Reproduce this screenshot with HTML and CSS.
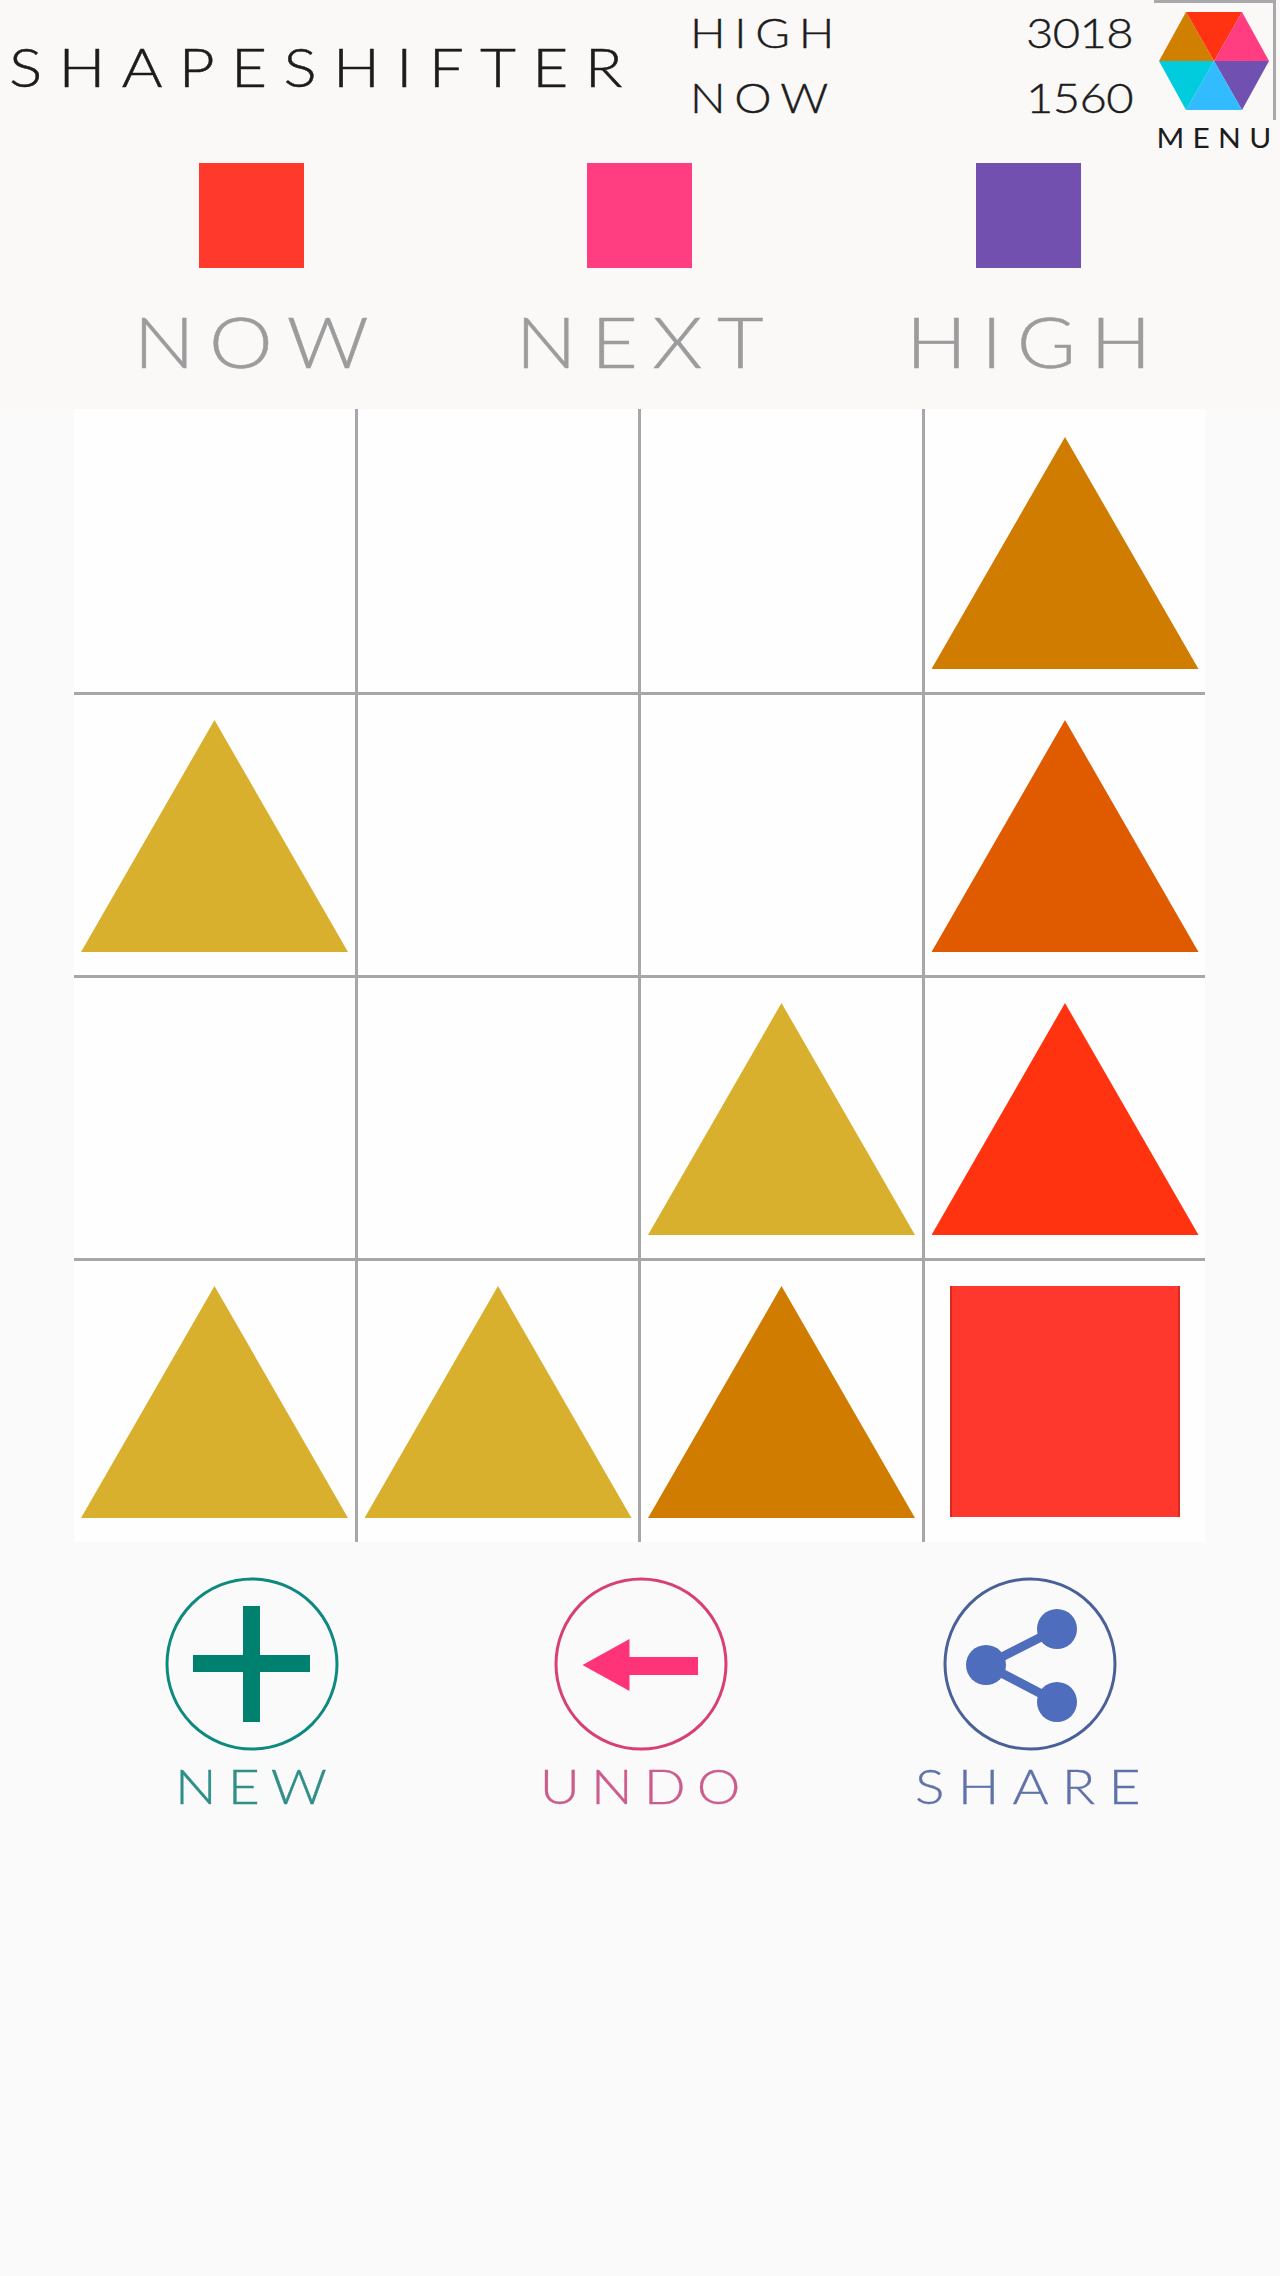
FILE: index.html
```html
<!DOCTYPE html>
<html lang="en">
<head>
<meta charset="utf-8">
<title>Shapeshifter</title>
<link rel="stylesheet" href="styles.css">
</head>
<body>
<div class="page">
  <header class="header">
    <h1 class="title">SHAPESHIFTER</h1>
    <div class="scores">
      <span class="score-label">HIGH</span><span class="score-value">3018</span>
      <span class="score-label">NOW</span><span class="score-value">1560</span>
    </div>
    <div class="menu">
      <svg class="hex" viewBox="0 0 110 98" width="110" height="98">
        <polygon class="h-orange" points="0,49 27,0 55,49"/>
        <polygon class="h-red" points="27,0 83,0 55,49"/>
        <polygon class="h-pink" points="83,0 110,49 55,49"/>
        <polygon class="h-purple" points="110,49 83,98 55,49"/>
        <polygon class="h-sky" points="83,98 27,98 55,49"/>
        <polygon class="h-cyan" points="27,98 0,49 55,49"/>
      </svg>
      <span class="menu-label">MENU</span>
    </div>
    <div class="corner"></div>
  </header>

  <section class="swatches">
    <div class="swatch-col"><div class="swatch s-red"></div><span class="swatch-label">NOW</span></div>
    <div class="swatch-col"><div class="swatch s-pink"></div><span class="swatch-label">NEXT</span></div>
    <div class="swatch-col"><div class="swatch s-purple"></div><span class="swatch-label">HIGH</span></div>
  </section>

  <section class="board">
    <div class="cell"></div>
    <div class="cell"></div>
    <div class="cell"></div>
    <div class="cell"><div class="tri c-amber"></div></div>

    <div class="cell"><div class="tri c-yellow"></div></div>
    <div class="cell"></div>
    <div class="cell"></div>
    <div class="cell"><div class="tri c-orange"></div></div>

    <div class="cell"></div>
    <div class="cell"></div>
    <div class="cell"><div class="tri c-yellow"></div></div>
    <div class="cell"><div class="tri c-red"></div></div>

    <div class="cell"><div class="tri c-yellow"></div></div>
    <div class="cell"><div class="tri c-yellow"></div></div>
    <div class="cell"><div class="tri c-amber"></div></div>
    <div class="cell"><div class="block"></div></div>
  </section>

  <section class="actions">
    <div class="action a-new">
      <svg class="action-icon" viewBox="0 0 174 174" width="174" height="174">
        <circle class="ring" cx="87" cy="87" r="85"/>
        <rect class="solid" x="28" y="78" width="117" height="17"/>
        <rect class="solid" x="78" y="29" width="17" height="116"/>
      </svg>
      <span class="action-label">NEW</span>
    </div>
    <div class="action a-undo">
      <svg class="action-icon" viewBox="0 0 174 174" width="174" height="174">
        <circle class="ring" cx="87" cy="87" r="85"/>
        <polygon class="solid" points="28.5,88 75.5,62 75.5,80 144,80 144,98 75.5,98 75.5,114"/>
      </svg>
      <span class="action-label">UNDO</span>
    </div>
    <div class="action a-share">
      <svg class="action-icon" viewBox="0 0 174 174" width="174" height="174">
        <circle class="ring" cx="87" cy="87" r="85"/>
        <polyline class="link" points="114,52 43,88 114,125"/>
        <circle class="solid" cx="114" cy="52" r="20"/>
        <circle class="solid" cx="43" cy="88" r="20"/>
        <circle class="solid" cx="114" cy="125" r="20"/>
      </svg>
      <span class="action-label">SHARE</span>
    </div>
  </section>
</div>
</body>
</html>
```

FILE: styles.css
```css
* { box-sizing: border-box; }
html, body { margin: 0; padding: 0; background: #fbfafa; }
body { font-family: "Lato", "Liberation Sans", sans-serif; font-weight: 300; }
.page { width: 1280px; height: 2276px; position: relative; overflow: hidden; }

/* header */
.header { display: flex; align-items: flex-start; height: 163px; padding-left: 9px; color: #1c1c1c; background: #fbf9f8; }
.title { margin: 36px 0 0; width: 681px; font-size: 54px; line-height: 62px; font-weight: 300; letter-spacing: 14.2px; white-space: nowrap; transform: scaleX(1.15); transform-origin: left center; -webkit-text-stroke: 0.5px #1c1c1c; }
.scores { display: grid; grid-template-columns: 1fr auto; width: 443px; margin-top: 8px; row-gap: 15px; font-size: 41px; line-height: 50px; -webkit-text-stroke: 0.4px #1c1c1c; }
.score-label { letter-spacing: 7.6px; transform: scaleX(1.15); transform-origin: left center; }
.score-value { letter-spacing: -0.5px; text-align: right; transform: scaleX(1.15); transform-origin: right center; }
.menu { display: flex; flex-direction: column; align-items: center; width: 116px; margin: 12px 0 0 23px; }
.hex { display: block; }
.menu-label { margin-top: 13px; padding-left: 7px; font-size: 26px; line-height: 30px; letter-spacing: 7.2px; font-weight: 400; white-space: nowrap; transform: scaleX(1.15); }
.corner { position: absolute; top: 0; left: 1154px; width: 122px; height: 120px; border-top: 3px solid #a9a9ab; border-right: 3px solid #a9a9ab; }
.h-orange { fill: #d07f00; }
.h-red { fill: #ff3311; }
.h-pink { fill: #ff3d80; }
.h-purple { fill: #7050b0; }
.h-sky { fill: #33bbff; }
.h-cyan { fill: #00ccdd; }

/* swatches */
.swatches { display: flex; padding-left: 57px; height: 246px; background: #fbf9f8; }
.swatch-col { width: 388.5px; display: flex; flex-direction: column; align-items: center; }
.swatch { width: 105px; height: 105px; }
.s-red { background: #ff3a2d; }
.s-pink { background: #ff3d80; }
.s-purple { background: #7250b0; }
.swatch-label { margin-top: 33px; padding-left: 13px; font-size: 70px; line-height: 80px; letter-spacing: 12.6px; color: #9c9c9c; transform: scaleX(1.15); -webkit-text-stroke: 0.5px #9c9c9c; }

/* board */
.board { display: grid; grid-template-columns: 281px 280px 281px 280px; grid-template-rows: 283px 280px 280px 281px; gap: 3px; width: 1131px; height: 1133px; margin-left: 74px; background: #a7a7a9; }
.cell { background: #fefefe; display: flex; align-items: flex-end; justify-content: center; padding-bottom: 23px; }
.cell:nth-child(n+13) { padding-bottom: 24px; }
.tri { width: 267px; height: 232px; clip-path: polygon(50% 0, 100% 100%, 0 100%); }
.c-yellow { background: #d8b02e; }
.c-amber { background: #cf7c00; }
.c-orange { background: #e05a00; }
.c-red { background: #ff3310; }
.block { width: 230px; height: 231px; margin-bottom: 1px; background: #ff382d; box-shadow: inset 2px 0 0 #d92a1e, inset -2px 0 0 #d92a1e; }

/* actions */
.actions { display: flex; padding-left: 57.5px; margin-top: 35px; }
.action { width: 389px; display: flex; flex-direction: column; align-items: center; }
.action-icon { display: block; }
.action-label { margin-top: 7px; padding-left: 8px; font-size: 48px; line-height: 56px; letter-spacing: 9.6px; transform: scaleX(1.15); -webkit-text-stroke: 0.3px currentColor; }
.ring { fill: none; stroke-width: 3px; }
.a-new .ring { stroke: #0d8a80; }
.a-new .solid { fill: #00806f; }
.a-new .action-label { color: #2f8f88; }
.a-undo .ring { stroke: #d8406f; }
.a-undo .solid { fill: #ff3377; }
.a-undo .action-label { color: #cc5c8c; }
.a-share .ring { stroke: #4a6099; }
.a-share .solid { fill: #4f6dbd; }
.a-share .link { fill: none; stroke: #4f6dbd; stroke-width: 9px; }
.a-share .action-label { color: #5f73a8; letter-spacing: 11.4px; }
```
